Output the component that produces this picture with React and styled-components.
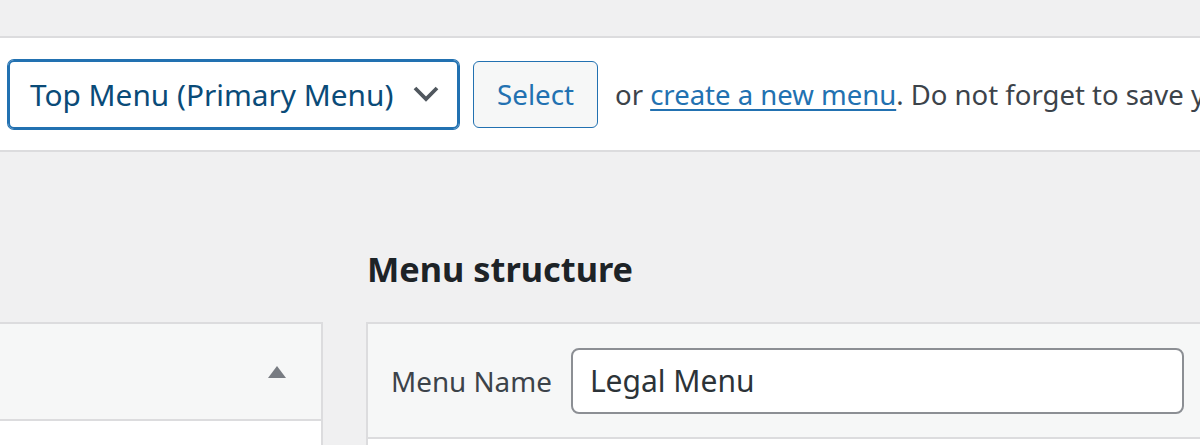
import styled, { createGlobalStyle } from 'styled-components';

const GlobalStyle = createGlobalStyle`
    html, body {
        margin: 0;
        padding: 0;
        background: #f0f0f1;
        overflow: hidden;
    }
    body {
        font-family: 'Noto Sans', 'Open Sans', sans-serif;
        color: #2c3338;
    }
`

const Page = styled.div`
    width: 1200px;
    height: 445px;
    padding-top: 36px;
    box-sizing: border-box;
    overflow: hidden;
`

const ManageBar = styled.div`
    display: flex;
    align-items: center;
    gap: 14px;
    height: 112px;
    padding-left: 8px;
    background: #fff;
    border-top: 2px solid #dcdcde;
    border-bottom: 2px solid #dcdcde;
    white-space: nowrap;
`

const SelectBox = styled.div`
    flex-shrink: 0;
    display: flex;
    align-items: center;
    justify-content: space-between;
    width: 451px;
    height: 69px;
    box-sizing: border-box;
    padding: 0 18px 0 20px;
    border: 2px solid #2271b1;
    box-shadow: 0 0 0 1px #2271b1;
    border-radius: 6px;
    color: #0a4b78;
    font-size: 29.8px;
`

const Button = styled.button`
    flex-shrink: 0;
    height: 67px;
    width: 125px;
    padding: 0;
    margin-right: 3px;
    background: #f6f7f7;
    border: 1.5px solid #2271b1;
    border-radius: 6px;
    color: #2271b1;
    font-family: inherit;
    font-size: 27.7px;
`

const Hint = styled.p`
    margin: 0;
    font-size: 27.5px;
    color: #3c434a;

    a {
        color: #2271b1;
        text-decoration: underline;
        text-underline-offset: 4px;
    }
`

const Columns = styled.div`
    display: grid;
    grid-template-columns: 323px 1180px;
    column-gap: 43px;
    padding-top: 95px;
`

const Heading = styled.h2`
    grid-column: 2;
    margin: 0 0 31px 1px;
    font-size: 34.3px;
    font-weight: 700;
    line-height: 44px;
    color: #1d2327;
`

const Panel = styled.div`
    grid-column: ${p => p.$col};
    grid-row: 2;
    background: #fff;
    border-top: 2px solid #dcdcde;
    border-left: ${p => (p.$edge === 'left' ? '2px solid #dcdcde' : 'none')};
    border-right: ${p => (p.$edge === 'right' ? '2px solid #dcdcde' : 'none')};
    height: 200px;
`

const PanelHead = styled.div`
    display: flex;
    align-items: center;
    background: #f6f7f7;
    border-bottom: 2px solid #dcdcde;
    height: ${p => p.$h}px;
    justify-content: ${p => p.$justify || 'flex-start'};
    padding: 0 35px 0 23px;
`

const Label = styled.label`
    font-size: 27.8px;
    color: #3c434a;
    margin-right: 19px;
`

const NameInput = styled.input`
    width: 613px;
    height: 66px;
    box-sizing: border-box;
    padding: 0 17px;
    border: 2px solid #8c8f94;
    border-radius: 8px;
    font-family: inherit;
    font-size: 30px;
    color: #2c3338;
    background: #fff;
`

function Chevron() {
    return (
        <svg width="26" height="16" viewBox="0 0 26 16">
            <path d="M2 2 L13 13 L24 2" fill="none" stroke="#50575e" strokeWidth="3.8" />
        </svg>
    )
}

function Arrow() {
    return (
        <svg width="18" height="12" viewBox="0 0 18 12">
            <path d="M9 0 L18 12 L0 12 Z" fill="#787c82" />
        </svg>
    )
}

export default function App() {
    return (
        <Page>
            <GlobalStyle />
            <ManageBar>
                <SelectBox>
                    <span>Top Menu (Primary Menu)</span>
                    <Chevron />
                </SelectBox>
                <Button>Select</Button>
                <Hint>
                    or <a href="#">create a new menu</a>. Do not forget to save your changes!
                </Hint>
            </ManageBar>

            <Columns>
                <Heading>Menu structure</Heading>
                <Panel $col={1} $edge="right">
                    <PanelHead $h={95} $justify="flex-end">
                        <Arrow />
                    </PanelHead>
                </Panel>
                <Panel $col={2} $edge="left">
                    <PanelHead $h={113}>
                        <Label htmlFor="menu-name">Menu Name</Label>
                        <NameInput id="menu-name" defaultValue="Legal Menu" />
                    </PanelHead>
                </Panel>
            </Columns>
        </Page>
    )
}
